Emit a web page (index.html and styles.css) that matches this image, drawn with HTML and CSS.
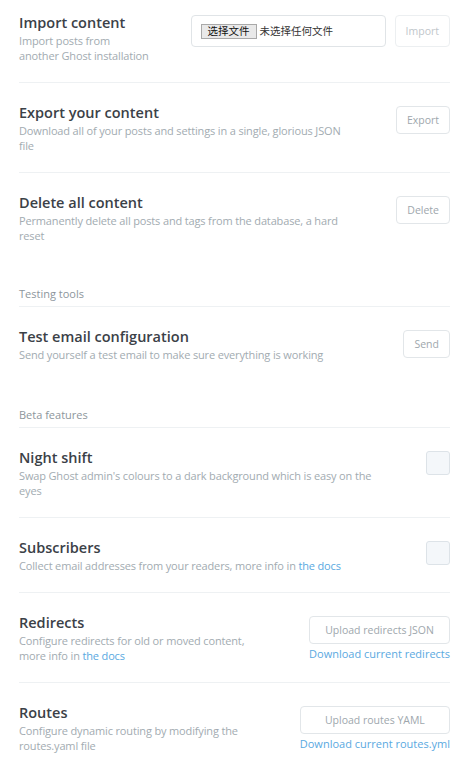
FILE: index.html
```html
<!DOCTYPE html>
<html lang="en">
<head>
<meta charset="utf-8">
<title>Labs</title>
<link rel="stylesheet" href="styles.css">
</head>
<body>
<main class="labs">
  <section class="group">
    <div class="setting setting-first">
      <div class="content">
        <div class="title">Import content</div>
        <div class="desc">Import posts from<br>another Ghost installation</div>
      </div>
      <div class="action action-row">
        <div class="file-input">
          <span class="file-btn">选择文件</span>
          <span class="file-name">未选择任何文件</span>
        </div>
        <button class="btn btn-tall btn-disabled">Import</button>
      </div>
    </div>
    <div class="setting">
      <div class="content">
        <div class="title">Export your content</div>
        <div class="desc">Download all of your posts and settings in a single, glorious JSON<br>file</div>
      </div>
      <div class="action">
        <button class="btn">Export</button>
      </div>
    </div>
    <div class="setting setting-last">
      <div class="content">
        <div class="title">Delete all content</div>
        <div class="desc">Permanently delete all posts and tags from the database, a hard<br>reset</div>
      </div>
      <div class="action">
        <button class="btn">Delete</button>
      </div>
    </div>
  </section>

  <section class="group">
    <div class="group-label">Testing tools</div>
    <div class="setting setting-last">
      <div class="content">
        <div class="title">Test email configuration</div>
        <div class="desc">Send yourself a test email to make sure everything is working</div>
      </div>
      <div class="action">
        <button class="btn">Send</button>
      </div>
    </div>
  </section>

  <section class="group group-beta">
    <div class="group-label">Beta features</div>
    <div class="setting">
      <div class="content">
        <div class="title">Night shift</div>
        <div class="desc">Swap Ghost admin's colours to a dark background which is easy on the<br>eyes</div>
      </div>
      <div class="action">
        <span class="checkbox"></span>
      </div>
    </div>
    <div class="setting">
      <div class="content">
        <div class="title">Subscribers</div>
        <div class="desc">Collect email addresses from your readers, more info in <a class="link" href="#">the docs</a></div>
      </div>
      <div class="action">
        <span class="checkbox"></span>
      </div>
    </div>
    <div class="setting">
      <div class="content">
        <div class="title">Redirects</div>
        <div class="desc">Configure redirects for old or moved content,<br>more info in <a class="link" href="#">the docs</a></div>
      </div>
      <div class="action action-stack">
        <button class="btn">Upload redirects JSON</button>
        <a class="link download" href="#">Download current redirects</a>
      </div>
    </div>
    <div class="setting setting-last">
      <div class="content">
        <div class="title">Routes</div>
        <div class="desc">Configure dynamic routing by modifying the<br>routes.yaml file</div>
      </div>
      <div class="action action-stack">
        <button class="btn">Upload routes YAML</button>
        <a class="link download" href="#">Download current routes.yml</a>
      </div>
    </div>
  </section>
</main>
</body>
</html>
```

FILE: styles.css
```css
html, body {
  margin: 0;
  padding: 0;
  background: #ffffff;
}

body {
  font-family: "Open Sans", "Noto Sans", "Liberation Sans", sans-serif;
  color: #3b4147;
}

.labs {
  padding: 0 24px 0 19px;
}

.group + .group {
  margin-top: 24px;
}

.group + .group-beta {
  margin-top: 26px;
}

.group-label {
  font-size: 11px;
  line-height: 15px;
  color: #8d969c;
  padding-bottom: 5px;
  border-bottom: 1px solid #eef1f3;
}

.setting {
  display: flex;
  align-items: flex-start;
  padding: 20px 0 19px;
  border-bottom: 1px solid #eef1f3;
}

.setting-first {
  padding-top: 13px;
}

.setting-last {
  border-bottom: none;
}

.content {
  flex: 1 1 auto;
  min-width: 0;
  margin-right: 30px;
}

.title {
  font-size: 14.5px;
  line-height: 20px;
  font-weight: 600;
  color: #3b4147;
}

.desc {
  font-size: 11px;
  line-height: 15px;
  letter-spacing: -0.15px;
  color: #a2abb1;
}

.link {
  color: #5aa9df;
  text-decoration: none;
}

.action {
  flex: 0 0 auto;
  margin-top: 3px;
}

.action-row {
  display: flex;
  gap: 9px;
  margin-top: 2px;
}

.action-stack {
  display: flex;
  flex-direction: column;
  align-items: stretch;
}

.btn {
  font-family: inherit;
  font-size: 10.5px;
  height: 28px;
  padding: 0 10px;
  background: #ffffff;
  color: #9ea7ad;
  border: 1px solid #e2e6e9;
  border-radius: 4px;
  cursor: pointer;
}

.btn-tall {
  height: 32px;
}

.btn-disabled {
  color: #bfc6cb;
  border-color: #eceff1;
}

.download {
  font-size: 11px;
  line-height: 18px;
  margin-top: 1px;
  text-align: right;
  white-space: nowrap;
}

.file-input {
  display: flex;
  align-items: center;
  width: 195px;
  height: 32px;
  box-sizing: border-box;
  padding-left: 9px;
  border: 1px solid #e0e4e7;
  border-radius: 4px;
  font-family: "Noto Sans CJK SC", "Noto Sans", sans-serif;
  font-size: 10.5px;
}

.file-btn {
  display: inline-flex;
  align-items: center;
  justify-content: center;
  height: 15px;
  box-sizing: border-box;
  padding: 0 6px;
  background: #e9e9e9;
  border: 1px solid #a9a9a9;
  color: #111111;
  line-height: 1;
}

.file-name {
  margin-left: 3px;
  color: #333333;
  line-height: 1;
}

.checkbox {
  display: block;
  width: 24px;
  height: 24px;
  box-sizing: border-box;
  background: #f4f7fa;
  border: 1px solid #dde3e8;
  border-radius: 3px;
}
```
